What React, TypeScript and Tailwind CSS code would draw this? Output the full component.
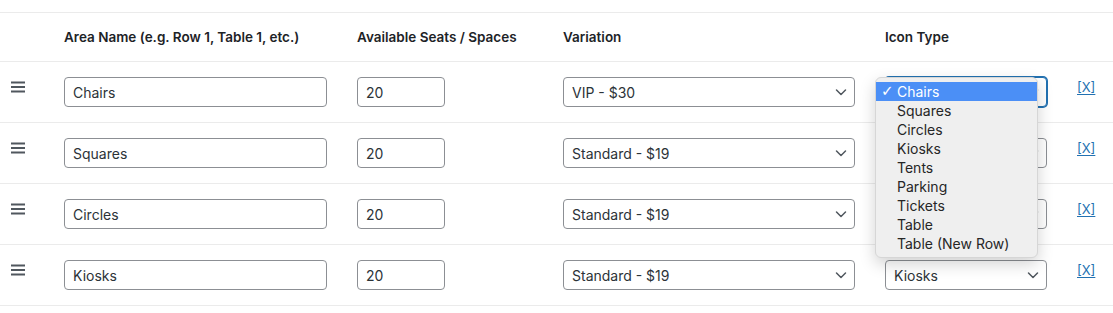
import React from "react";

const rows = [
  { name: "Chairs", seats: "20", variation: "VIP - $30", icon: "Chairs" },
  { name: "Squares", seats: "20", variation: "Standard - $19", icon: "Squares" },
  { name: "Circles", seats: "20", variation: "Standard - $19", icon: "Circles" },
  { name: "Kiosks", seats: "20", variation: "Standard - $19", icon: "Kiosks" },
];

const iconTypes = ["Chairs", "Squares", "Circles", "Kiosks", "Tents", "Parking", "Tickets", "Table", "Table (New Row)"];
const variations = ["VIP - $30", "Standard - $19"];

function Chevron() {
  return (
    <svg
      className="pointer-events-none absolute right-[6px] top-1/2 -translate-y-1/2"
      width="16"
      height="16"
      viewBox="0 0 16 16"
      fill="none"
    >
      <path d="M3.5 6 L8 10.5 L12.5 6" stroke="#50575e" strokeWidth="1.5" strokeLinecap="round" strokeLinejoin="round" />
    </svg>
  );
}

function Handle() {
  return (
    <div className="flex h-5 items-center pl-[11px]">
      <svg width="14" height="12" viewBox="0 0 14 12">
        <rect x="0" y="0.5" width="14" height="2" fill="#50575e" />
        <rect x="0" y="5" width="14" height="2" fill="#50575e" />
        <rect x="0" y="9.5" width="14" height="2" fill="#50575e" />
      </svg>
    </div>
  );
}

function IconMenu() {
  return (
    <div className="absolute left-[-10px] top-0 z-10 w-[163px] rounded-[6px] border border-[#d6d6d6] bg-[#efefef] py-1 shadow-[0_6px_16px_rgba(0,0,0,0.18)]">
      {iconTypes.map((t, i) => (
        <div
          key={t}
          className={`relative flex h-[19px] items-center pl-[21px] text-[14px] ${
            i === 0 ? "bg-[#4b8ff6] text-white" : "text-[#262626]"
          }`}
        >
          {i === 0 && <span className="absolute left-[5px] text-[15px] font-['DejaVu_Sans']">✓</span>}
          {t}
        </div>
      ))}
    </div>
  );
}

export default function App() {
  return (
    <div className="bg-white pt-3 font-['Inter',sans-serif] text-[#2c3338]">
      <div className="border-t border-[#ebebeb]">
        <div className="grid h-[49px] grid-cols-[64px_293px_206px_322px_192px_1fr] items-center border-b border-[#ebebeb] text-[13.5px] font-semibold text-[#1d2327]">
          <div />
          <div>Area Name (e.g. Row 1, Table 1, etc.)</div>
          <div>Available Seats / Spaces</div>
          <div>Variation</div>
          <div>Icon Type</div>
          <div />
        </div>

        {rows.map((r, idx) => (
          <div
            key={r.name}
            className="grid grid-cols-[64px_293px_206px_322px_192px_1fr] items-start border-b border-[#ebebeb] py-[15px]"
          >
            <Handle />
            <div>
              <input
                defaultValue={r.name}
                className="h-[30px] w-[263px] rounded-[4px] border border-[#8c8f94] bg-white px-2 text-[14px] text-[#2c3338] outline-none"
              />
            </div>
            <div>
              <input
                defaultValue={r.seats}
                className="h-[30px] w-[88px] rounded-[4px] border border-[#8c8f94] bg-white px-2 text-[14px] text-[#2c3338] outline-none"
              />
            </div>
            <div className="relative w-[292px]">
              <select
                defaultValue={r.variation}
                className="h-[30px] w-full appearance-none rounded-[4px] border border-[#8c8f94] bg-white pl-2 pr-6 text-[14px] text-[#2c3338] outline-none"
              >
                {variations.map((v) => (
                  <option key={v}>{v}</option>
                ))}
              </select>
              <Chevron />
            </div>
            <div className="relative w-[162px]">
              <select
                defaultValue={r.icon}
                className={`h-[30px] w-full appearance-none rounded-[4px] border bg-white pl-2 pr-6 text-[14px] text-[#2c3338] outline-none ${
                  idx === 0 ? "border-[#2271b1] shadow-[0_0_0_1px_#2271b1]" : "border-[#8c8f94]"
                }`}
              >
                {iconTypes.map((t) => (
                  <option key={t}>{t}</option>
                ))}
              </select>
              <Chevron />
              {idx === 0 && <IconMenu />}
            </div>
            <div className="leading-[19px]">
              <a href="#" className="text-[13px] text-[#2271b1] underline underline-offset-2">
                [X]
              </a>
            </div>
          </div>
        ))}
      </div>
    </div>
  );
}
